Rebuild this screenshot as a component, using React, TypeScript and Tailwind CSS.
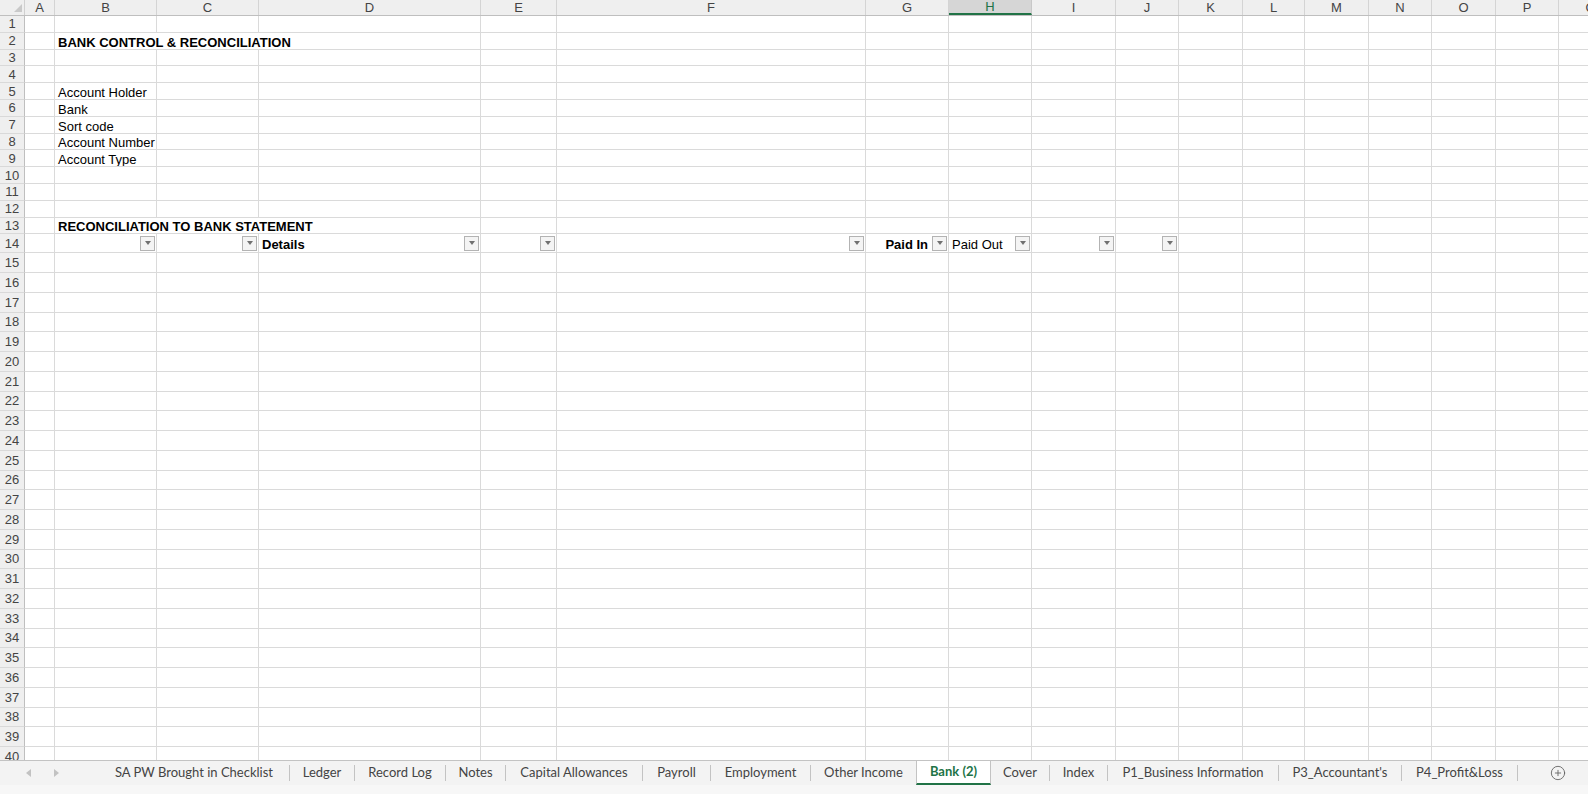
import React from "react";
import { CirclePlus } from "lucide-react";

const columns = [
  { key: "A", w: "w-[30px]" },
  { key: "B", w: "w-[102px]" },
  { key: "C", w: "w-[102px]" },
  { key: "D", w: "w-[222px]" },
  { key: "E", w: "w-[76px]" },
  { key: "F", w: "w-[309px]" },
  { key: "G", w: "w-[83px]" },
  { key: "H", w: "w-[83px]" },
  { key: "I", w: "w-[84px]" },
  { key: "J", w: "w-[63px]" },
  { key: "K", w: "w-[64px]" },
  { key: "L", w: "w-[62px]" },
  { key: "M", w: "w-[64px]" },
  { key: "N", w: "w-[63px]" },
  { key: "O", w: "w-[64px]" },
  { key: "P", w: "w-[63px]" },
  { key: "Q", w: "w-[64px]" },
];

const sheets = [
  { label: "SA PW Brought in Checklist", w: "w-[190px]" },
  { label: "Ledger", w: "w-[64px]" },
  { label: "Record Log", w: "w-[90px]" },
  { label: "Notes", w: "w-[59px]" },
  { label: "Capital Allowances", w: "w-[136px]" },
  { label: "Payroll", w: "w-[67px]" },
  { label: "Employment", w: "w-[99px]" },
  { label: "Other Income", w: "w-[105px]" },
  { label: "Bank (2)", w: "w-[75px]", active: true },
  { label: "Cover", w: "w-[58px]" },
  { label: "Index", w: "w-[57px]" },
  { label: "P1_Business Information", w: "w-[170px]" },
  { label: "P3_Accountant's", w: "w-[122px]" },
  { label: "P4_Profit&Loss", w: "w-[115px]" },
];

type Cell = { w: string; content?: React.ReactNode; className?: string };

function FilterBtn() {
  return (
    <span className="flex h-[15px] w-[15px] shrink-0 items-center justify-center border border-[#b3b3b3] bg-[#f4f4f4]">
      <span className="h-0 w-0 border-x-[3px] border-t-[4px] border-x-transparent border-t-[#707070]" />
    </span>
  );
}

function rowHeight(r: number) {
  if (r <= 13) return "h-[16.8px]";
  if (r === 14) return "h-[19px]";
  return "h-[19.76px]";
}

function cellsFor(r: number): Cell[] {
  const plain = (from: number) =>
    columns.slice(from).map((c) => ({ w: c.w } as Cell));

  // rows with text that runs over into the next columns
  if (r === 2 || r === 13) {
    return [
      { w: columns[0].w },
      {
        w: "w-[426px]",
        className: "items-end font-bold pl-[3px]",
        content: r === 2 ? "BANK CONTROL & RECONCILIATION" : "RECONCILIATION TO BANK STATEMENT",
      },
      ...plain(4),
    ];
  }

  const labels: Record<number, string> = {
    5: "Account Holder",
    6: "Bank",
    7: "Sort code",
    8: "Account Number",
    9: "Account Type",
  };
  if (labels[r]) {
    return [
      { w: columns[0].w },
      { w: columns[1].w, className: "items-end pl-[3px]", content: labels[r] },
      ...plain(2),
    ];
  }

  if (r === 14) {
    const btn = (i: number) => ({ w: columns[i].w, className: "items-center justify-end pr-px", content: <FilterBtn /> });
    return [
      { w: columns[0].w },
      btn(1),
      btn(2),
      {
        w: columns[3].w,
        className: "items-center justify-between pl-[3px] pr-px font-bold",
        content: (
          <>
            <span className="pt-[2px]">Details</span>
            <FilterBtn />
          </>
        ),
      },
      btn(4),
      btn(5),
      {
        w: columns[6].w,
        className: "items-center justify-end gap-[4px] pr-px font-bold",
        content: (
          <>
            <span className="pt-[2px]">Paid In</span>
            <FilterBtn />
          </>
        ),
      },
      {
        w: columns[7].w,
        className: "items-center justify-between pl-[3px] pr-px",
        content: (
          <>
            <span className="pt-[2px]">Paid Out</span>
            <FilterBtn />
          </>
        ),
      },
      btn(8),
      btn(9),
      ...plain(10),
    ];
  }

  return plain(0);
}

export default function App() {
  const rows = Array.from({ length: 40 }, (_, i) => i + 1);

  return (
    <div className="flex h-[794px] w-[1588px] flex-col overflow-hidden bg-white font-['Liberation_Sans',Arial,sans-serif] text-[13px] text-black">
      {/* Column headers */}
      <div className="flex h-[16px] shrink-0 border-b border-[#bfbfbf] bg-[#efefef]">
        <div className="relative w-[25px] shrink-0 border-r border-[#d0d0d0]">
          <svg className="absolute bottom-[3px] right-[2px]" width="8" height="8" viewBox="0 0 8 8">
            <polygon points="8,0 8,8 0,8" fill="#c9c9c9" />
          </svg>
        </div>
        {columns.map((c) =>
          c.key === "H" ? (
            <div
              key={c.key}
              className={`${c.w} flex shrink-0 items-center justify-center border-r border-b-2 border-r-[#c8c8c8] border-b-[#217346] bg-[#d6d6d6] text-[13px] leading-none text-[#217346]`}
            >
              {c.key}
            </div>
          ) : (
            <div
              key={c.key}
              className={`${c.w} flex shrink-0 items-center justify-center border-r border-[#d4d4d4] text-[13px] leading-none text-[#444]`}
            >
              {c.key}
            </div>
          )
        )}
      </div>

      {/* Grid */}
      <div className="min-h-0 flex-1 overflow-hidden">
        {rows.map((r) => (
          <div key={r} className={`flex ${rowHeight(r)}`}>
            <div className="flex w-[25px] shrink-0 items-center justify-center border-r border-b border-r-[#bfbfbf] border-b-[#d9d9d9] bg-[#efefef] text-[13px] leading-none text-[#444]">
              {r}
            </div>
            {cellsFor(r).map((cell, i) => (
              <div
                key={i}
                className={`${cell.w} flex shrink-0 overflow-hidden whitespace-nowrap border-r border-b border-[#dadada] leading-none ${cell.className ?? ""}`}
              >
                {cell.content}
              </div>
            ))}
          </div>
        ))}
      </div>

      {/* Sheet tabs */}
      <div className="flex h-[25px] shrink-0 items-stretch border-t border-[#c3c3c3] bg-[#f3f3f3] font-['Lato','Open_Sans',sans-serif] text-[13px] text-[#444]">
        <div className="flex w-[99px] shrink-0 items-center">
          <span className="ml-[26px] h-0 w-0 border-y-[4px] border-r-[5px] border-y-transparent border-r-[#c2c2c2]" />
          <span className="ml-[23px] h-0 w-0 border-y-[4px] border-l-[5px] border-y-transparent border-l-[#c2c2c2]" />
        </div>
        {sheets.map((s, i) => {
          const next = sheets[i + 1];
          if (s.active) {
            return (
              <div
                key={s.label}
                className={`${s.w} flex shrink-0 items-center justify-center border-x border-b-2 border-x-[#c3c3c3] border-b-[#217346] bg-white font-bold text-[#217346]`}
              >
                {s.label}
              </div>
            );
          }
          return (
            <React.Fragment key={s.label}>
              {i > 0 && !sheets[i - 1].active && <span className="my-[4px] w-px shrink-0 bg-[#c3c3c3]" />}
              <div className={`${s.w} flex shrink-0 items-center justify-center whitespace-nowrap`}>{s.label}</div>
              {!next && <span className="my-[4px] w-px shrink-0 bg-[#c3c3c3]" />}
            </React.Fragment>
          );
        })}
        <div className="flex flex-1 items-center pl-[32px]">
          <CirclePlus size={16} strokeWidth={1.3} color="#5f5f5f" />
        </div>
      </div>
      <div className="h-[9px] shrink-0 bg-[#f7f7f7]" />
    </div>
  );
}
